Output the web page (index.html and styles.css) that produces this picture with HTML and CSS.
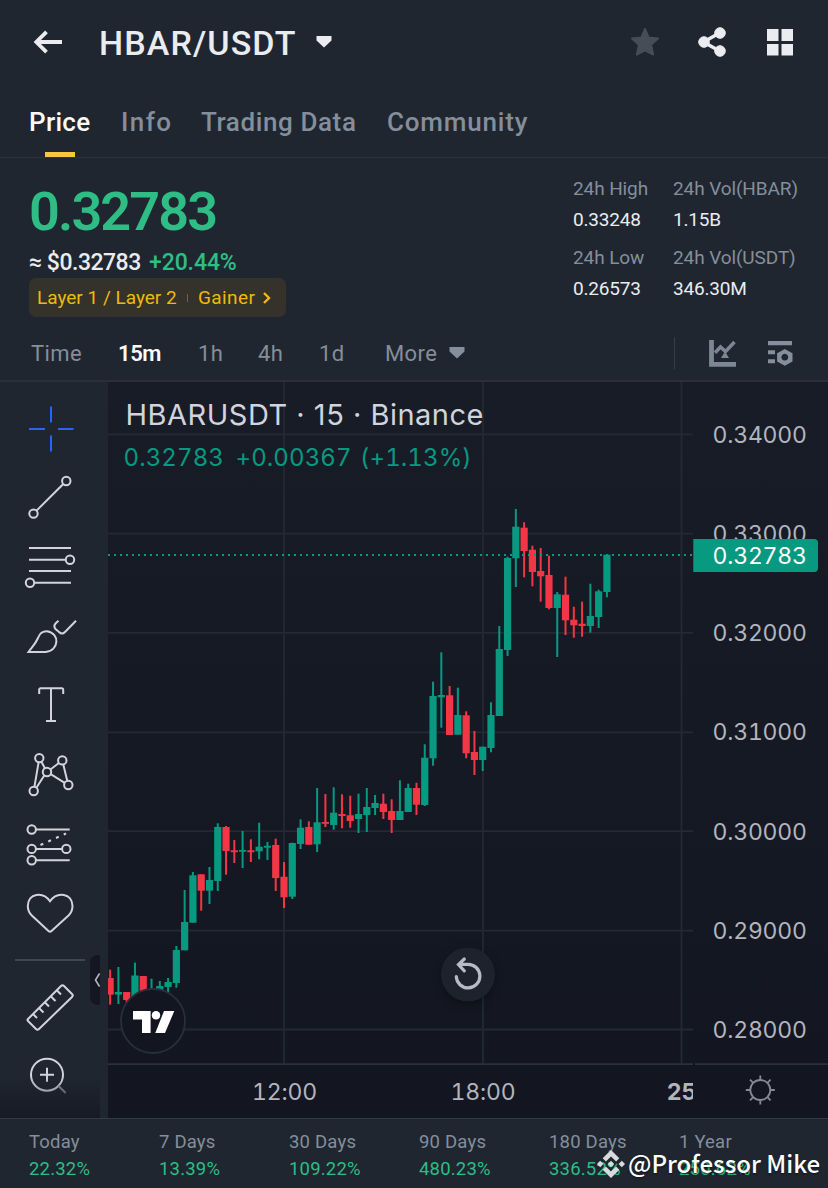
FILE: index.html
```html
<!DOCTYPE html>
<html lang="en">
<head>
    <meta charset="UTF-8">
    <meta name="viewport" content="width=device-width, initial-scale=1.0">
    <title>HBAR/USDT</title>
    <link rel="stylesheet" href="styles.css">
</head>
<body>
    <div class="screen">
        <!-- Header -->
        <header class="header">
            <svg class="back" width="30" height="24" viewBox="0 0 30 24" fill="none" stroke="#eaecef" stroke-width="3.8"><path d="M29 12H4M13.5 1.8 3.3 12l10.2 10.2"/></svg>
            <h1 class="pair">HBAR/USDT</h1>
            <svg class="caret" width="16" height="12" viewBox="0 0 16 12" fill="#eaecef"><path d="M.5 0h15v4.5L8 11.5.5 4.5z"/></svg>
            <div class="header-icons">
                <svg width="30" height="30" viewBox="0 0 30 30" fill="#474d57" stroke="#474d57" stroke-width="2" stroke-linejoin="round"><path d="M15 2l3.7 8.600 9.300.9-7 6.300 2.200 9.700L15 23.300l-8.200 4.200L9 17.800 2 11.500l9.300-.9z"/></svg>
                <svg class="share" width="30" height="30" viewBox="0 0 30 30" fill="#eaecef" stroke="#eaecef"><path d="M22.500 6 6.500 15l16 9" fill="none" stroke-width="3.500"/><circle cx="23" cy="6" r="5.300"/><circle cx="7" cy="15" r="5.300"/><circle cx="23" cy="24" r="5.300"/></svg>
                <svg width="26" height="27" viewBox="0 0 26 27" fill="#eaecef"><path d="M0 0h11.500v12H0zM14.500 0H26v12H14.500zM0 15h11.500v11.500H0zM14.500 15H26v11.500H14.500z"/></svg>
            </div>
        </header>

        <!-- Tabs -->
        <nav class="tabs">
            <a class="tab tab-price active">Price</a>
            <a class="tab tab-info">Info</a>
            <a class="tab tab-data">Trading Data</a>
            <a class="tab tab-community">Community</a>
        </nav>

        <!-- Price summary -->
        <section class="summary">
            <div class="summary-left">
                <div class="price">0.32783</div>
                <div class="sub-price"><span class="usd">≈ $0.32783</span><span class="change">+20.44%</span></div>
                <div class="tags">
                    <span class="tag-layer">Layer 1 / Layer 2</span>
                    <span class="tag-divider"></span>
                    <span class="tag-gainer">Gainer</span>
                    <svg width="8" height="12" viewBox="0 0 8 12" fill="none" stroke="#f0b90b" stroke-width="2.400"><path d="M1 1l5 5-5 5"/></svg>
                </div>
            </div>
            <div class="stats">
                <div class="stat"><span class="stat-label">24h High</span><span class="stat-value">0.33248</span></div>
                <div class="stat"><span class="stat-label">24h Vol(HBAR)</span><span class="stat-value">1.15B</span></div>
                <div class="stat"><span class="stat-label">24h Low</span><span class="stat-value">0.26573</span></div>
                <div class="stat"><span class="stat-label">24h Vol(USDT)</span><span class="stat-value">346.30M</span></div>
            </div>
        </section>

        <!-- Intervals -->
        <div class="intervals">
            <span class="interval i-time">Time</span>
            <span class="interval i-15m active">15m</span>
            <span class="interval i-1h">1h</span>
            <span class="interval i-4h">4h</span>
            <span class="interval i-1d">1d</span>
            <span class="interval i-more">More</span>
            <svg width="16" height="12" viewBox="0 0 16 12" fill="#848e9c"><path d="M.5 0h15v4.500L8 11.500.5 4.500z"/></svg>
            <div class="interval-tools">
                <svg width="27" height="27" viewBox="0 0 27 27" fill="none" stroke="#7d8694"><path d="M2.500 0v24.300H27" stroke-width="4.800"/><path d="M6 12.800l5.500-5.800 5 4.500L25.500 2" stroke-width="3.500"/><path d="M16 11.500l4 6.500h-8z" fill="#7d8694" stroke="none"/></svg>
                <svg width="25" height="25" viewBox="0 0 25 25" fill="#848e9c"><path d="M0 0h24v4.300H0zM0 9.300h7v4H0zM0 18.300h7v4H0z"/><path fill-rule="evenodd" d="M16.800 8l7.700 4.200v8.200l-7.700 4.400-7.700-4.400v-8.200zM16.800 12.800a3.400 3.400 0 1 0 .01 0z"/></svg>
            </div>
        </div>

        <!-- Chart -->
        <main class="chart">
            <aside class="toolbar">
                <svg class="tool cross" viewBox="0 0 60 60"><path d="M8 30h16M37 30h15.500M30 7.500v16M30 36.500v16"/></svg>
                <svg class="tool" viewBox="0 0 60 60"><path d="M15.500 42.600 42.300 16"/><circle cx="45.300" cy="13" r="4.200"/><circle cx="12.500" cy="45.600" r="4.200"/></svg>
                <svg class="tool" viewBox="0 0 60 60"><path d="M8 11h42M8 22.700h37M8 34h42M13 45.700h37"/><circle cx="49" cy="22.700" r="4.200"/><circle cx="9" cy="45.700" r="4.200"/></svg>
                <svg class="tool" viewBox="0 0 60 60"><path d="M7.500 46H24.500C38 45 39.500 27 26 25.200 20 25 18.300 28.500 17 32 14.500 38 11 41 7.500 46zM37.500 14.800 35 17q-3 3-.5 6l3.500 3q3 3 6 0L55 14.800"/></svg>
                <svg class="tool" viewBox="0 0 60 60"><path d="M18.200 19v-4.200q0-1.500 1.500-1.500h21q1.500 0 1.500 1.500V19M30 13.300V46M25 46h10"/></svg>
                <svg class="tool" viewBox="0 0 60 60"><path d="M17.600 17.300 13.400 41.800M20.400 16.700l3.500 6.600M29.400 24.500l8.500-6.500M42.300 19.500l4 16.400M29.700 29.200l14 8.600M23.400 30.300l-8 12.400"/><circle cx="18.300" cy="13.100" r="4.200"/><circle cx="41.300" cy="15.400" r="4.200"/><circle cx="26" cy="27" r="4.200"/><circle cx="47.300" cy="40" r="4.200"/><circle cx="12.700" cy="46" r="4.200"/></svg>
                <svg class="tool" viewBox="0 0 60 60"><path d="M15 15.500h33.700M15 34.900h26M15 46.200h33.700"/><path d="M19.500 31 45 19.500" stroke-dasharray="3 5.500"/><circle cx="10.700" cy="15.500" r="4.200"/><circle cx="10.700" cy="34.900" r="4.200"/><circle cx="45.300" cy="34.900" r="4.200"/><circle cx="10.700" cy="46.200" r="4.200"/></svg>
                <svg class="tool" viewBox="0 0 60 60"><path d="M29 18.200C22 8 6.800 10 6.800 23c0 4 1.500 7 4 9.500L27.500 48q1.500 1.500 3 0l17-15.500c2.500-2.500 4-5.500 4-9.500C51.500 10 36 8 29 18.200z"/></svg>
                <hr class="tool-separator">
                <svg class="tool" viewBox="0 0 60 60"><path d="M7 42 40 9q1.500-1.500 3 0l8 8q1.500 1.500 0 3L18 52q-1.500 1.500-3 0l-8-8q-1-1 0-2zM12 37l4 4M18 31l4.500 4.500M24 25.500l4 4M30 19.500l4.500 4.500M36 13.500l4 4"/></svg>
                <svg class="tool" viewBox="0 0 60 60"><path d="M19 28.700h14M26 21.700v14"/><circle cx="26" cy="28.700" r="16"/><path d="M37.500 40l7.200 7" stroke="#868a96"/></svg>
                <div class="toolbar-fade"></div>
                <div class="collapse"><svg width="6" height="16" viewBox="0 0 6 16" fill="none" stroke="#b2b5be" stroke-width="1.600"><path d="M5.500 1.500 1.500 8l4 6.500"/></svg></div>
            </aside>

            <svg class="plot" width="720" height="736" viewBox="108 382 720 736">
                <clipPath id="axisClip"><path d="M108 1066h585v50H108z"/></clipPath>
                <g class="grid">
                    <path d="M108 434.300h585M108 533.600h585M108 632.800h585M108 732.300h585M108 831.200h585M108 930.600h585M108 1029.500h585"/>
                    <path d="M284 382v682M483 382v682M681.500 382v682"/>
                    <path class="axis" d="M108 1064.200h585M695 1064.200h133"/>
                </g>
                <g class="price-labels">
                    <text x="712.500" y="442.700">0.34000</text>
                    <text x="712.500" y="541.900">0.33000</text>
                    <text x="712.500" y="641.100">0.32000</text>
                    <text x="712.500" y="740.300">0.31000</text>
                    <text x="712.500" y="839.500">0.30000</text>
                    <text x="712.500" y="938.700">0.29000</text>
                    <text x="712.500" y="1037.700">0.28000</text>
                </g>
                <g class="time-labels" clip-path="url(#axisClip)">
                    <text x="284.500" y="1100">12:00</text>
                    <text x="483" y="1100">18:00</text>
                    <text x="681.500" y="1100" class="day">25</text>
                </g>
                <g id="candles"></g>
                <path class="last-line" d="M108 555h585"/>
                <path d="M693.300 539H814q4 0 4 4v25q0 4-4 4H693.300z" fill="#089981"/>
                <text class="last-price" x="712.500" y="563.500">0.32783</text>
                <text class="legend" x="125.500" y="424.500">HBARUSDT · 15 · Binance</text>
                <text class="legend-price" y="466"><tspan x="123.500">0.32783</tspan><tspan x="235.500">+0.00367</tspan><tspan x="360">(+1.13%)</tspan></text>

                <!-- TradingView badge -->
                <circle cx="153" cy="1021" r="32" fill="#131621" stroke="#2a2e39" stroke-width="1.800"/>
                <g fill="#fff"><path d="M133 1011h17.600v22h-8.600v-13.500h-9zM164 1011h10.300l-9.300 22h-9.700z"/><circle cx="156" cy="1015.300" r="4.200"/></g>

                <!-- Reset button -->
                <circle class="reset" cx="468" cy="974.500" r="27"/>
                <path d="M456.300 976.500a11.800 11.800 0 1 0 11.500-12.200H459.500M464.300 959l-5.800 5.600 5.800 6.200" fill="none" stroke="#b8bbc5" stroke-width="3.200" stroke-linecap="round"/>

                <!-- Settings -->
                <g fill="none" stroke="#868993" stroke-width="1.800"><circle cx="760.300" cy="1090" r="10"/><path d="M760.300 1080v-4.500M760.300 1100v4.500M750.300 1090h-4.500M770.300 1090h4.500M753.200 1082.900l-3.200-3.200M767.400 1082.900l3.200-3.200M753.200 1097.100l-3.200 3.200M767.400 1097.100l3.200 3.200"/></g>
            </svg>
        </main>

        <!-- Performance -->
        <footer class="performance">
            <div class="period"><span>Today</span><b>22.32%</b></div>
            <div class="period"><span>7 Days</span><b>13.39%</b></div>
            <div class="period"><span>30 Days</span><b>109.22%</b></div>
            <div class="period"><span>90 Days</span><b>480.23%</b></div>
            <div class="period"><span>180 Days</span><b>336.52%</b></div>
            <div class="period"><span>1 Year</span><b>250.62%</b></div>
            <div class="watermark">
                <svg width="28" height="28" viewBox="0 0 28 28" fill="#d9dadc"><path d="M14 0l8.300 8.300-3.200 3.200L14 6.400l-5.100 5.100-3.200-3.200zM14 28l8.300-8.300-3.200-3.200L14 21.600l-5.100-5.100-3.200 3.200zM0 14l3.200-3.200L6.400 14l-3.200 3.200zM21.600 14l3.200-3.200L28 14l-3.200 3.200zM10.800 14l3.200-3.200 3.200 3.200-3.200 3.200z"/></svg>
                <span>@Professor Mike</span>
            </div>
        </footer>
    </div>
    <script src="index.js"></script>
</body>
</html>
```

FILE: styles.css
```css
body {
    margin: 0;
    background: #1f2630;
    font-family: Roboto, "Liberation Sans", sans-serif;
    color: #eaecef;
}
.screen {
    width: 828px;
    height: 1188px;
    overflow: hidden;
    display: flex;
    flex-direction: column;
}
svg {
    display: block;
    flex: none;
}

/* Header */
.header {
    height: 84px;
    padding: 0 35px 0 33px;
    display: flex;
    align-items: center;
    box-sizing: border-box;
}
.pair {
    margin: 1px 0 0 36px;
    width: 198px;
    font-size: 34px;
    font-weight: 500;
    line-height: 40px;
    letter-spacing: 1.1px;
    white-space: nowrap;
}
.caret {
    margin-left: 19px;
}
.header-icons {
    margin-left: auto;
    display: flex;
    align-items: center;
    gap: 37px;
}
.share {
    margin-right: 3px;
}

/* Tabs */
.tabs {
    height: 74px;
    padding-left: 29px;
    display: flex;
    gap: 30px;
    box-sizing: border-box;
    border-bottom: 1px solid #2b323c;
}
.tab {
    position: relative;
    padding-top: 22px;
    font-size: 26px;
    font-weight: 500;
    line-height: 32px;
    letter-spacing: 0.6px;
    color: #848e9c;
    white-space: nowrap;
}
.tab-price {
    width: 62px;
    letter-spacing: 0.3px;
}
.tab-info {
    width: 50px;
    letter-spacing: 1.4px;
}
.tab-data {
    width: 156px;
}
.tab-community {
    letter-spacing: 0.8px;
}
.tab.active {
    color: #fafafa;
}
.tab.active:after {
    content: '';
    position: absolute;
    left: 16px;
    bottom: 0;
    width: 30px;
    height: 5px;
    background: #f0c93c;
}

/* Price summary */
.summary {
    height: 168px;
    padding: 0 29px;
    display: flex;
    justify-content: space-between;
    box-sizing: border-box;
}
.price {
    margin-top: 23px;
    height: 65px;
    font-size: 54px;
    font-weight: 600;
    line-height: 61px;
    letter-spacing: -1.9px;
    color: #2ebd85;
}
.sub-price {
    height: 32px;
    display: flex;
    gap: 8px;
    font-size: 23px;
    font-weight: 500;
    line-height: 33px;
    letter-spacing: -0.1px;
}
.usd {
    width: 112px;
    letter-spacing: -0.5px;
}
.change {
    color: #2ebd85;
}
.tags {
    width: 257px;
    height: 39px;
    padding-left: 8px;
    display: flex;
    align-items: center;
    box-sizing: border-box;
    border-radius: 7px;
    background: #34322b;
    color: #f0b90b;
    font-size: 19px;
    white-space: nowrap;
}
.tag-layer {
    width: 141px;
}
.tag-divider {
    width: 1px;
    height: 8px;
    margin: 0 10px 0 9px;
    background: #80621f;
}
.tag-gainer {
    width: 58px;
    margin-right: 7px;
    letter-spacing: 0.4px;
}
.stats {
    width: 226px;
    margin-top: 15px;
    display: grid;
    grid-template-columns: 100px 1fr;
    grid-auto-rows: 69px;
}
.stat {
    display: flex;
    flex-direction: column;
    font-size: 19px;
    line-height: 31px;
    letter-spacing: -0.1px;
    white-space: nowrap;
}
.stat-label {
    color: #848e9c;
}
.stat-value {
    letter-spacing: -0.2px;
}

/* Intervals */
.intervals {
    height: 56px;
    padding: 0 35px 0 31px;
    display: flex;
    align-items: center;
    box-sizing: border-box;
    border-bottom: 2px solid #2a303a;
    color: #848e9c;
    font-size: 22px;
    letter-spacing: 0.4px;
}
.interval {
    white-space: nowrap;
}
.interval.active {
    color: #fafafa;
    font-weight: 600;
    letter-spacing: -0.4px;
}
.i-time {
    width: 87px;
}
.i-15m {
    width: 80px;
}
.i-1h {
    width: 60px;
}
.i-4h {
    width: 61px;
}
.i-1d {
    width: 66px;
}
.i-more {
    width: 64px;
}
.interval-tools {
    height: 32px;
    margin-left: auto;
    padding-left: 34px;
    display: flex;
    align-items: center;
    gap: 32px;
    border-left: 1px solid #363d47;
}

/* Chart */
.chart {
    height: 736px;
    display: flex;
    border-bottom: 1px solid #343a44;
}
.toolbar {
    position: relative;
    width: 108px;
    padding: 12px 0 0 21px;
    display: flex;
    flex-direction: column;
    box-sizing: border-box;
}
.tool {
    width: 60px;
    height: 60px;
    margin: 4.6px 0;
    fill: none;
    stroke: #d1d4dc;
    stroke-width: 2;
}
.tool-separator {
    width: 70px;
    height: 2px;
    margin: 11px 0 12px -6px;
    border: 0;
    background: #404651;
}
.cross {
    stroke: #2962ff;
}
.toolbar-fade {
    position: absolute;
    left: 0;
    bottom: 0;
    width: 100px;
    height: 42px;
    background: linear-gradient(rgba(19, 22, 33, 0), rgba(19, 22, 33, 0.75));
}
.collapse {
    position: absolute;
    left: 90px;
    top: 573px;
    width: 10px;
    height: 50px;
    display: flex;
    align-items: center;
    justify-content: flex-end;
    border-radius: 8px 0 0 8px;
    background: #141722;
}
.plot {
    background: linear-gradient(#181c27, #131621);
    font-family: Inter, sans-serif;
    font-variant-numeric: tabular-nums;
}
.grid {
    fill: none;
    stroke: #242933;
    stroke-width: 1.8;
}
.axis {
    stroke: #2b303a;
}
.price-labels,
.time-labels {
    fill: #b2b5be;
    font-size: 23px;
    letter-spacing: -0.2px;
}
.time-labels text {
    text-anchor: middle;
}
.day {
    font-weight: 700;
}
.last-line {
    stroke: #0a9a82;
    stroke-width: 2;
    stroke-dasharray: 2 4;
}
.last-price {
    fill: #fff;
    font-size: 23px;
    letter-spacing: -0.2px;
}
.legend {
    fill: #d1d4dc;
    font-size: 29px;
    font-variant-numeric: normal;
    letter-spacing: 0.5px;
}
.legend-price {
    fill: #089981;
    font-size: 24px;
    letter-spacing: 0.1px;
}
.up {
    fill: #089981;
}
.down {
    fill: #f23645;
}
.reset {
    fill: #1e222d;
    filter: drop-shadow(0 3px 4px rgba(0, 0, 0, 0.35));
}

/* Performance */
.performance {
    position: relative;
    height: 69px;
    padding: 10px 0 0 29px;
    display: flex;
    box-sizing: border-box;
}
.period {
    width: 130px;
    display: flex;
    flex-direction: column;
    font-size: 18.5px;
    line-height: 27px;
    color: #848e9c;
    letter-spacing: 0.2px;
}
.period b {
    font-weight: 400;
    color: #2ebd85;
}
.watermark {
    position: absolute;
    left: 597px;
    top: 28px;
    display: flex;
    align-items: center;
    gap: 3px;
    font-family: "Noto Sans CJK SC", sans-serif;
    font-size: 24.1px;
    font-weight: 500;
    line-height: 36px;
    color: #fff;
    white-space: nowrap;
    text-shadow: 0 1px 2px rgba(0, 0, 0, 0.5);
}
.watermark span {
    margin-top: -2px;
}
```

FILE: index.js
```javascript
// one row per 15m candle: direction, high, open/close top, open/close bottom, low
const candles = [
    ['down', 969.7, 978, 994.7, 1004.7],
    ['up', 967, 992, 994.5, 1004],
    ['down', 992, 992, 1000, 1005.7],
    ['up', 962.7, 975.5, 1000, 1002],
    ['down', 976, 976, 997, 1002],
    ['up', 978.7, 990, 993, 996],
    ['up', 981, 986, 993, 996],
    ['up', 978, 982, 987, 994],
    ['up', 946, 950, 983, 987.7],
    ['up', 890, 922, 950.3, 950.3],
    ['up', 872, 875.3, 922.7, 922.7],
    ['down', 874.3, 874.3, 890.7, 910.7],
    ['up', 867, 880, 890.7, 904],
    ['up', 823.3, 827, 881, 891],
    ['down', 826, 827, 851, 874.7],
    ['down', 840, 850.3, 852.2, 863],
    ['up', 831, 850, 851.7, 868],
    ['down', 839.3, 850.3, 852.2, 862],
    ['up', 822.7, 846.7, 851.3, 859.3],
    ['up', 842, 845.8, 847.7, 860],
    ['down', 838.7, 845, 878, 891],
    ['down', 862, 876.7, 897.3, 908],
    ['up', 842.7, 843, 896.7, 899],
    ['up', 819.3, 827.7, 844, 849],
    ['down', 821.3, 827, 844.7, 844.7],
    ['up', 788, 822.3, 844.3, 852],
    ['down', 794, 822, 823.8, 827],
    ['up', 787.3, 812.7, 825, 829.7],
    ['down', 794.3, 814, 816, 828.3],
    ['down', 795.7, 815.3, 821, 827.7],
    ['up', 793.7, 814, 819, 833],
    ['up', 788, 807, 815, 832],
    ['up', 795, 803, 808, 815],
    ['down', 793.7, 803.7, 812, 819],
    ['down', 799.3, 811, 820, 833],
    ['up', 780.3, 811, 820, 820],
    ['up', 783.7, 788, 812, 812],
    ['down', 782.7, 788, 804.7, 815],
    ['up', 744.3, 757.7, 805, 806],
    ['up', 681.7, 696, 758.3, 765.7],
    ['up', 652.3, 695, 697.3, 727.7],
    ['down', 686, 695.3, 735, 735],
    ['up', 687.7, 715, 734.7, 734.7],
    ['down', 711.3, 715.3, 753.3, 758.3],
    ['down', 731, 752, 760, 775],
    ['up', 746.7, 746.7, 760, 771],
    ['up', 702.3, 715, 748, 752.3],
    ['up', 626, 649, 716, 716],
    ['up', 556.7, 558, 650, 656],
    ['up', 509, 526.7, 558.3, 587],
    ['down', 522.3, 527.7, 551, 577.3],
    ['down', 545.7, 549.7, 572, 586.3],
    ['down', 548, 571, 576.3, 601.7],
    ['down', 555.7, 575, 608, 609.3],
    ['up', 592, 594.3, 608, 657],
    ['down', 576.7, 594.7, 620.3, 635],
    ['down', 606.7, 619.7, 625.3, 637.7],
    ['down', 601.7, 623.7, 626, 636.7],
    ['up', 583.7, 616, 626, 632.7],
    ['up', 589.7, 591.3, 617, 628],
    ['up', 554.7, 554.7, 592, 597.3]
];

const step = 8.28;
const noon = 284; // x of the 12:00 candle
const group = document.getElementById('candles');

function addRect(cls, x, y, width, height) {
    const rect = document.createElementNS('http://www.w3.org/2000/svg', 'rect');
    rect.setAttribute('class', cls);
    rect.setAttribute('x', x);
    rect.setAttribute('y', y);
    rect.setAttribute('width', width);
    rect.setAttribute('height', height);
    group.appendChild(rect);
}

candles.forEach(([cls, high, top, bottom, low], i) => {
    const x = noon + (i - 21) * step;
    addRect(cls, x - 1, high, 2, low - high);
    addRect(cls, x - 3.6, top, 7.2, bottom - top);
});
```
